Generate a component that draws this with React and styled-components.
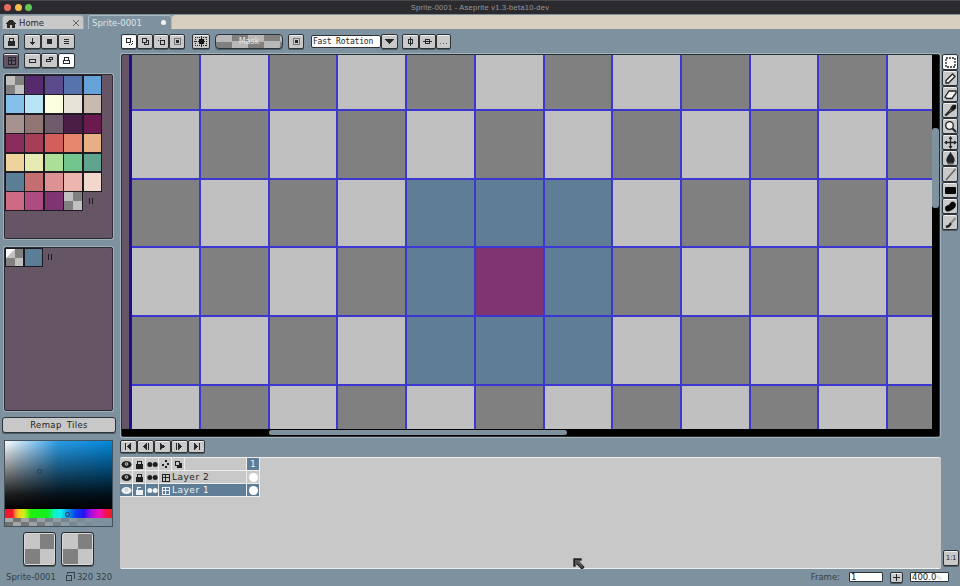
import React from "react";
import styled, { createGlobalStyle, css } from "styled-components";

const Global = createGlobalStyle`
  html, body { margin: 0; padding: 0; width: 960px; height: 586px; overflow: hidden; background: #7d929e; }
  #root { width: 960px; height: 586px; }
  * { box-sizing: border-box; }
`;

const checker = (s, a = "#808080", b = "#c0c0c0") => css`
  background: repeating-conic-gradient(${a} 0 25%, ${b} 0 50%) 0 0 / ${s}px ${s}px;
`;

const Page = styled.div`
  position: relative; width: 960px; height: 586px; display: flex; flex-direction: column;
  background: #7d929e; color: #202428; overflow: hidden;
  font-family: "DejaVu Sans", sans-serif; font-size: 8.5px; letter-spacing: 0;
`;
const TitleBar = styled.div`
  height: 14px; flex: none; background: #2b2b2f; display: flex; align-items: center; position: relative;
  padding-left: 4px; gap: 3.5px; border-top: 1px solid #48484c;
`;
const Light = styled.span`width: 7px; height: 7px; border-radius: 50%; background: ${p => p.$c};`;
const TitleText = styled.div`
  position: absolute; left: 0; right: 0; text-align: center; color: #98989b; font: 7.5px "Liberation Sans", sans-serif; letter-spacing: .25px;
`;
const TabBar = styled.div`height: 15px; flex: none; display: flex; padding-left: 2px; gap: 4px; background: #7d929e; align-items: flex-end;`;
const Tab = styled.div`
  width: ${p => p.$w}px; height: 14px; border-radius: 3px 3px 0 0; display: flex; align-items: center; gap: 3px; padding: 0 3px 0 3px;
  background: ${p => p.$active ? "#7d929e" : "#c8c8c8"}; color: ${p => p.$active ? "#dfe6ea" : "#2a2a2a"};
  border: 1px solid ${p => p.$active ? "#a9bac3" : "#9aa3a8"}; border-bottom: 0; font-size: 8.5px;
`;
const TabLabel = styled.span`flex: 1; white-space: nowrap;`;
const TabFill = styled.div`flex: 1; height: 14px; background: #d9cfc0; margin-left: -4px; border-radius: 3px 0 0 0;`;
const Dot = styled.span`width: 5px; height: 5px; border-radius: 50%; background: #f4f4f4; margin-right: 2px;`;
const Body = styled.div`flex: 1; display: flex; min-height: 0;`;
const Left = styled.div`width: 120px; flex: none; padding: 5px 0 0 3px; display: flex; flex-direction: column;`;
const Right = styled.div`flex: 1; display: flex; flex-direction: column; padding-top: 5px; min-width: 0;`;
const ButtonRow = styled.div`display: flex; gap: 5px; height: 15px; margin-bottom: 4px;`;
const Group = styled.div`display: flex; gap: 0;`;
const Btn = styled.div`
  width: ${p => p.$w || 16}px; height: ${p => p.$h || 15}px; margin-right: ${p => p.$mr || 0}px; display: flex; align-items: center; justify-content: center;
  flex: none; color: #25282b; border: 1px solid #2c3237; border-radius: 2px; font-size: 7px; letter-spacing: -.3px;
  background: ${p => p.$on ? "#fdfdfd" : p.$dark ? "#645564" : "#c9c9c9"};
  box-shadow: inset 0 1px 0 #efefef, 0 1px 0 #4f5b63;
`;
const Panel = styled.div`
  width: 109px; height: ${p => p.$h}px; margin-top: ${p => p.$mt}px; flex: none; margin-left: 1px; background: #665565; border: 1px solid #2d2a33; border-radius: 2px;
  box-shadow: 0 0 0 1px #9db0ba; position: relative;
`;
const Palette = styled.div`display: grid; grid-template-columns: repeat(5, 19.4px); grid-auto-rows: 19.4px; width: 97px;`;
const Swatch = styled.div`
  border: 1px solid #1d1a22; margin: 0 -.5px -.5px 0;
  ${p => p.$check ? checker(18) : css`background: ${p.$c};`}
`;
const Grip = styled.span`
  position: absolute; left: ${p => p.$x}px; top: ${p => p.$y}px; width: 4px; height: 6px;
  border-left: 1px solid #1c1c22; border-right: 1px solid #1c1c22;
`;
const TileRow = styled.div`display: flex; width: 38px;`;
const TileSwatch = styled.div`
  width: 19px; height: 19px; border: 1px solid #1d1a22; position: relative;
  ${p => p.$check ? checker(18) : css`background: ${p.$c};`}
`;
const Corner = styled.span`position:absolute;left:0;top:0;width:0;height:0;border-top:9px solid #fff;border-right:9px solid transparent;`;
const Remap = styled.button`
  width: 114px; height: 16px; margin: 6px 0 7px -1px; background: #c8c8c8; border: 1px solid #2f353a; border-radius: 3px; padding: 0; flex: none;
  box-shadow: 0 1px 0 #4f5b63; color: #222; font: 8.5px "DejaVu Sans", sans-serif; letter-spacing: .35px; word-spacing: 2px;
`;
const Picker = styled.div`width: 109px; height: 87px; margin-left: 1px; flex: none; border: 1px solid #42525c; position: relative; display: flex; flex-direction: column;`;
const Field = styled.div`flex: 1; background: linear-gradient(to bottom, rgba(0,0,0,0) 0%, rgba(0,0,0,.55) 48%, rgba(0,0,0,.88) 78%, #000 100%), linear-gradient(to right, #fff 0%, #2a9ce6 50%, #0388dc 100%);`;
const Hue = styled.div`height: 9px; flex: none; background: linear-gradient(to right,#f01a2e 0 7%,#f09030 10%,#f8d010 13%,#c8f020 18%,#20f010 24%,#10f020 40%,#10f0c0 46%,#10f0f0 52%,#0aa0e8 58%,#0840f0 66%,#2a10f0 74%,#a010e0 80%,#f010c0 88%,#f01080 92%,#f01a2e 96%);`;
const Alpha = styled.div`height: 8px; flex: none; background: linear-gradient(to right, rgba(125,146,158,0), #7d929e 90%), repeating-conic-gradient(#707070 0 25%, #a8a8a8 0 50%) 0 0 / 16px 8px;`;
const Ring = styled.span`position:absolute;left:${p=>p.$x}px;top:${p=>p.$y}px;width:5px;height:5px;border-radius:50%;border:1px solid #2a3a4a;`;
const BigSwatches = styled.div`display: flex; gap: 5px; margin: 5px 0 0 20px;`;
const BigSwatch = styled.div`
  width: 33px; height: 34px; border: 1px solid #252a30; border-radius: 3px; box-shadow: 0 1px 0 #4f5b63, inset 0 0 0 1px #d8d8d8;
  ${checker(32, "#808080", "#c6c6c6")}
`;
const Toolbar = styled.div`height: 15px; display: flex; align-items: center; margin: 0 0 5px 1px; flex: none;`;
const ToolGroup = styled.div`display: flex; margin-right: ${p => p.$mr}px;`;
const MaskBtn = styled.div`
  width: 68px; height: 15px; margin-right: 5px; border: 1px solid #2c3237; border-radius: 4px; display: flex; align-items: center; justify-content: center;
  color: #e8e8e8; font-size: 8px; box-shadow: 0 1px 0 #4f5b63;
  background: repeating-conic-gradient(#808080 0 25%, #b8b8b8 0 50%) 0 0 / 32px 13px;
`;
const Select = styled.div`
  width: 70px; height: 13px; background: #fdfdfd; border: 1px solid #2c3237; border-radius: 2px; font: 8px "DejaVu Sans Mono", monospace; letter-spacing: -.2px; padding: 0 0 0 1px; color:#1e1e1e; display:flex; align-items:center; white-space: nowrap;
`;
const WorkArea = styled.div`flex: none; display: flex; height: 383px;`;
const CanvasFrame = styled.div`
  width: 819px; margin-left: 1px; height: 383px; border: 1px solid #2a2f33; border-radius: 2px; position: relative; background: #000; display: grid;
  grid-template-columns: 810px 7px; grid-template-rows: 374px 7px; overflow: hidden; box-shadow: 0 0 0 1px #a4b5be;
`;
const Viewport = styled.div`display: grid; grid-template-columns: 7px 3px 1fr; background: #665565; overflow: hidden;`;
const Edge = styled.div`background: #1c0f96;`;
const Sheet = styled.div`
  grid-column: 3; display: grid; gap: 2px; background: #3d37d2;
  grid-template-columns: 67px 67px 66px 67px 67px 67px 66px 67px 67px 66px 67px 44px;
  grid-template-rows: 54px 67px 66px 67px 67px 43px;
`;
const toneColor = { d: "#808080", l: "#c0c0c0", b: "#5f7e96", p: "#7f3570" };
const Cell = styled.div`background: ${p => toneColor[p.$t]};`;
const VBar = styled.div`background: #000; position: relative;`;
const VThumb = styled.div`position:absolute;left:0;right:0;top:73px;height:80px;background:#7d929e;border-radius:3px;`;
const HBar = styled.div`background: #000; position: relative; grid-column: 1 / 3;`;
const HThumb = styled.div`position:absolute;top:1px;height:5px;left:147px;width:298px;background:#7d929e;border-radius:3px;`;
const Tools = styled.div`width: 16px; margin-left: 2px; display: flex; flex-direction: column; gap: 0;`;
const Timeline = styled.div`flex: 1; display: flex; flex-direction: column; padding-top: 3px;`;
const NavRow = styled.div`display: flex; height: 13px; margin-bottom: 4px;`;
const TimeRow = styled.div`display: flex; height: 112px;`;
const Layers = styled.div`width: 821px; background: #c8c8c8; border-top: 1px solid #eee; border-bottom: 1px solid #eee; border-radius: 2px; display:flex; flex-direction: column;`;
const LayerRow = styled.div`display: flex; height: 13px; width: 140px;`;
const LCell = styled.div`
  width: ${p => p.$w || 13}px; height: 13px; flex: none; display: flex; align-items: center; justify-content: center;
  background: ${p => p.$sel ? "#5f7e96" : "#c8c8c8"}; color: ${p => p.$sel ? "#eef2f4" : "#1f1f1f"};
  border-right: 1px solid #eee; border-bottom: 1px solid #eee;
`;
const LName = styled.div`
  width: ${p => p.$w}px; height: 13px; flex: none; padding-left: 2px; display: flex; align-items: center; gap: 2px; white-space: nowrap; font-size: 9px; letter-spacing: .5px;
  background: ${p => p.$sel ? "#5f7e96" : "#c8c8c8"}; color: ${p => p.$sel ? "#eef2f4" : "#1f1f1f"};
  border-right: 1px solid #eee; border-bottom: 1px solid #eee;
`;
const FrameDot = styled.span`width: 9px; height: 9px; border-radius: 50%; background: #fff;`;
const OneOne = styled.div`margin: 93px 0 0 2px;`;
const Status = styled.div`height: 16px; flex: none; display: flex; align-items: center; padding: 0 11px 0 6px; color: #33414a; margin-top: -1px; margin-bottom: 1px;`;
const Spacer = styled.div`flex: 1;`;
const StatText = styled.span`margin: 0 ${p => p.$mr || 0}px 0 ${p => p.$ml || 0}px; white-space: nowrap;`;
const Input = styled.div`
  width: ${p => p.$w}px; height: 10px; background: #fdfdfd; border: 1px solid #2c3237; border-radius: 1px; margin-right: ${p => p.$mr}px; font-size: 8.5px; line-height: 8px; padding-left: 1px; color:#222; white-space:nowrap; overflow:hidden;
`;
const Suffix = styled.span`color: #c4c4c4; font-size: 6px;`;
const Cursor = styled.svg`position: absolute; left: 572px; top: 557px;`;

const I = ({ children, s = 9, fill = "currentColor" }) => (
  <svg width={s} height={s} viewBox="0 0 9 9" fill={fill} shapeRendering="crispEdges">{children}</svg>
);
const T = ({ children }) => (
  <svg width="13" height="13" viewBox="0 0 13 13" fill="none" stroke="#1f2226" strokeWidth="1.300">{children}</svg>
);
const Lock = ({ open }) => <I><rect x="1" y="4" width="7" height="5" /><path d={open ? "M2 4V1h4v1H3v2z" : "M2 4V1h5v3H6V2H3v2z"} /></I>;
const Eye = () => <svg width="11" height="9" viewBox="0 0 11 9" fill="currentColor"><ellipse cx="5.500" cy="4.500" rx="5" ry="3.500" /><circle cx="5.500" cy="4" r="1.800" fill="#c8c8c8" /><circle cx="5.500" cy="4" r=".8" /></svg>;
const Dots = () => <svg width="11" height="7" viewBox="0 0 11 7" fill="currentColor"><circle cx="2.800" cy="3.500" r="2.500" /><circle cx="8.200" cy="3.500" r="2.500" /></svg>;
const Sq = () => <I><rect x="1" y="1" width="7" height="7" fill="none" stroke="currentColor" /><path d="M1 4.500h7M4.500 1v7" stroke="currentColor" /></I>;

const pal = [
  [null,"#562b6e","#5b4a8c","#5673ae","#64a2d8"],
  ["#85c0ea","#b8e4f6","#fbffdf","#e8e3d8","#c8baae"],
  ["#a69390","#917572","#705b6c","#4b1e47","#6b1a50"],
  ["#8a2d5a","#a73e58","#d25f5a","#e4876c","#e8af84"],
  ["#efd39c","#e8eab4","#acdf96","#73c58e","#5fa48e"],
  ["#5b7d96","#c46e72","#dc9292","#ecb6ae","#f2d8cc"],
  ["#cf6a85","#ad4c80","#7f3570",null],
];
const tone = (r, c) => {
  if (r === 3 && c === 5) return "p";
  if (r >= 2 && r <= 4 && c >= 4 && c <= 6) return "b";
  return (r + c) % 2 === 0 ? "d" : "l";
};

export default function App() {
  return (
    <Page>
      <Global />
      <TitleBar>
        <Light $c="#ec6a5e" /><Light $c="#f4bf4f" /><Light $c="#61c554" />
        <TitleText>Sprite-0001 - Aseprite v1.3-beta10-dev</TitleText>
      </TitleBar>
      <TabBar>
        <Tab $w={82}>
          <I s={10}><path d="M4.500 1 9 5H8v4H5.500V6h-2v3H1V5H0z" /></I>
          <TabLabel>Home</TabLabel>
          <I s={8}><path d="M1 1l7 7M8 1l-7 7" stroke="#555" fill="none" /></I>
        </Tab>
        <Tab $w={84} $active><TabLabel>Sprite-0001</TabLabel><Dot /></Tab>
        <TabFill />
      </TabBar>
      <Body>
        <Left>
          <ButtonRow>
            <Btn><Lock /></Btn>
            <Group>
              <Btn $w={17}><I><path d="M4 1h1v4h2L4.500 8 2 5h2z" /></I></Btn>
              <Btn $w={17}><I><rect x="2" y="2" width="5" height="5" /></I></Btn>
              <Btn $w={17}><I><path d="M2 2h5v1H2zM2 4h5v1H2zM2 6h5v1H2z" /></I></Btn>
            </Group>
          </ButtonRow>
          <ButtonRow>
            <Btn $dark><Sq /></Btn>
            <Group>
              <Btn $w={17}><I><path d="M1 3h7v4H1zM2 4v2h5V4z" fill="currentColor" /></I></Btn>
              <Btn $w={17}><I><path d="M4 1h4v3H6v2H1V3h3zM5 2v1h2V2zM2 4v1h3V4z" /></I></Btn>
              <Btn $w={17} $on><I><path d="M2 1h5v3h1v4H1V4h1zM3 2v2h3V2zM2 5v2h5V5z" /></I></Btn>
            </Group>
          </ButtonRow>
          <Panel $h={165} $mt={2}>
            <Palette>
              {pal.flat().map((c, i) => <Swatch key={i} $c={c} $check={!c} />)}
            </Palette>
            <Grip $x={84} $y={123} />
          </Panel>
          <Panel $h={164} $mt={8}>
            <TileRow>
              <TileSwatch $check><Corner /></TileSwatch>
              <TileSwatch $c="#5b7d96" />
            </TileRow>
            <Grip $x={43} $y={6} />
          </Panel>
          <Remap>Remap Tiles</Remap>
          <Picker>
            <Field />
            <Hue />
            <Alpha />
            <Ring $x={32} $y={28} />
            <Ring $x={60} $y={71} />
          </Picker>
          <BigSwatches><BigSwatch /><BigSwatch /></BigSwatches>
        </Left>
        <Right>
          <Toolbar>
            <ToolGroup $mr={7}>
              <Btn $on><I><path d="M1 1h5v5H1zM2 2v3h3V2zM7 4h1v1H7zM7 6h1v1H7zM4 7h1v1H4zM6 7h1v1H6z" /></I></Btn>
              <Btn><I><path d="M1 1h5v2h2v5H3V6H1zM2 2v3h3V2zM6 4v2H4v1h3V4z" /></I></Btn>
              <Btn><I><path d="M3 1h1v1H3zM1 3h1v1H1zM3 3h5v5H3zM4 4v3h3V4z" /></I></Btn>
              <Btn><I><path d="M1 1h7v7H1zM2 2v5h5V2z" fill="#777" /><rect x="3" y="3" width="3" height="3" /></I></Btn>
            </ToolGroup>
            <ToolGroup $mr={5}>
              <Btn $w={18}><svg width="14" height="11" viewBox="0 0 14 11"><rect x="5" y="3" width="5" height="5" fill="#111" /><path d="M1 1.500h12M1 9.500h12M1.500 1v9M12.500 1v9M7.500 0v11M0 5.500h14" stroke="#222" strokeDasharray="1 1" fill="none" /></svg></Btn>
            </ToolGroup>
            <MaskBtn>Mask</MaskBtn>
            <ToolGroup $mr={7}>
              <Btn><I><path d="M1 1h7v7H1zM2 2v5h5V2z" fill="#777" /><rect x="3" y="3" width="3" height="3" /></I></Btn>
            </ToolGroup>
            <Select>Fast Rotation</Select>
            <ToolGroup $mr={4}>
              <Btn $w={17}><I><path d="M0 2h9L4.500 7z" /></I></Btn>
            </ToolGroup>
            <ToolGroup $mr={0}>
              <Btn $w={17}><I><path d="M4 0h1v9H4zM2 2h5v5H2zM3 3v3h3V3z" /></I></Btn>
              <Btn $w={17}><I><path d="M0 4h9v1H0zM2 2h5v5H2zM3 3v3h3V3z" /></I></Btn>
              <Btn $w={15}><I fill="#666"><path d="M1 6h1v1H1zM4 6h1v1H4zM7 6h1v1H7z" /></I></Btn>
            </ToolGroup>
          </Toolbar>
          <WorkArea>
            <CanvasFrame>
              <Viewport>
                <div />
                <Edge />
                <Sheet>
                  {[0,1,2,3,4,5].flatMap(r => Array.from({ length: 12 }, (_, c) => <Cell key={r + "-" + c} $t={tone(r, c)} />))}
                </Sheet>
              </Viewport>
              <VBar><VThumb /></VBar>
              <HBar><HThumb /></HBar>
            </CanvasFrame>
            <Tools>
              <Btn $h={16} $on><T><rect x="2" y="2" width="9" height="9" strokeDasharray="2 1" /></T></Btn>
              <Btn $h={16}><T><path d="M2 11V8.500L8.500 2 11 4.500 4.500 11z" fill="#f2f2f2" /></T></Btn>
              <Btn $h={16}><T><path d="M1 9l4-6h7v2L8 10.500H3z" fill="#f2f2f2" /></T></Btn>
              <Btn $h={16}><T><path d="M2 11.500 1.500 11 7 5l1.500 1.500z" fill="#f2f2f2" /><path d="M7 4l2-2.500h2.500V4L9.500 6z" fill="#111" /></T></Btn>
              <Btn $h={16}><T><circle cx="5.500" cy="5.500" r="3.800" fill="#f2f2f2" /><path d="M8.500 8.500l3.500 3.500" strokeWidth="2" /></T></Btn>
              <Btn $h={16}><T><path d="M6.500 1v11M1 6.500h11" /><path d="M6.500 0 4.500 3h4zM6.500 13l-2-3h4zM0 6.500l3-2v4zM13 6.500l-3-2v4z" fill="#1f2226" stroke="none" /></T></Btn>
              <Btn $h={16}><T><path d="M6.500 1C8 4 10.500 6 10 8.500A3.600 3.600 0 0 1 3 8.500C2.500 6 5 4 6.500 1z" fill="#1f2226" /><path d="M3.500 11.500h6" strokeWidth="2" stroke="#555" /></T></Btn>
              <Btn $h={16}><T><path d="M2 12 11.500 1" stroke="#5a5a5a" strokeWidth="1.200" /></T></Btn>
              <Btn $h={16}><T><rect x="1" y="3" width="11" height="7" rx="1" fill="#050505" stroke="none" /></T></Btn>
              <Btn $h={16}><T><path d="M1 8C1 5 5 6 6 3.500 7 1.500 10 1 11.500 3.500 13 6 10 9 7 10.500 3 12.500 1 11 1 8z" fill="#050505" stroke="none" /></T></Btn>
              <Btn $h={16}><T><path d="M2 11l3-1 2-3" stroke="#222" strokeWidth="2.400" /><path d="M7 7l4.500-5" stroke="#8a8a8a" strokeWidth="2" /></T></Btn>
            </Tools>
          </WorkArea>
          <Timeline>
            <NavRow>
              <Btn $w={17} $h={13}><I><path d="M1 1h1v7H1zM7 1v7L3 4.500z" /></I></Btn>
              <Btn $w={17} $h={13}><I><path d="M6 1v7L2 4.500zM7 1h1v7H7z" /></I></Btn>
              <Btn $w={17} $h={13}><I><path d="M2 1l5 3.500L2 8z" /></I></Btn>
              <Btn $w={17} $h={13}><I><path d="M3 1v7l4-3.500zM1 1h1v7H1z" /></I></Btn>
              <Btn $w={17} $h={13}><I><path d="M2 1v7l4-3.500zM7 1h1v7H7z" /></I></Btn>
            </NavRow>
            <TimeRow>
              <Layers>
                <LayerRow>
                  <LCell><Eye /></LCell><LCell><Lock /></LCell><LCell><Dots /></LCell>
                  <LCell><I><path d="M4 0h2v2H4zM1 4h2v2H1zM6 3h2v2H6zM4 6h2v2H4z" /></I></LCell>
                  <LCell><I><path d="M1 1h5v2h2v5H3V6H1zM2 2v3h3V2z" /></I></LCell>
                  <LName $w={62} />
                  <LCell $sel>1</LCell>
                </LayerRow>
                <LayerRow>
                  <LCell><Eye /></LCell><LCell><Lock /></LCell><LCell><Dots /></LCell>
                  <LName $w={88}><Sq />Layer 2</LName>
                  <LCell><FrameDot /></LCell>
                </LayerRow>
                <LayerRow>
                  <LCell $sel><Eye /></LCell><LCell $sel><Lock open /></LCell><LCell $sel><Dots /></LCell>
                  <LName $sel $w={88}><Sq />Layer 1</LName>
                  <LCell $sel><FrameDot /></LCell>
                </LayerRow>
              </Layers>
              <OneOne><Btn $h={16}>1:1</Btn></OneOne>
            </TimeRow>
          </Timeline>
        </Right>
      </Body>
      <Status>
        <StatText $mr={9}>Sprite-0001</StatText>
        <I s={10}><path d="M2 0h7v6H8V1H3v1H2zM1 3h5v5H1zM2 4v3h3V4z" /></I>
        <StatText $ml={2}>320 320</StatText>
        <Spacer />
        <StatText $mr={9}>Frame:</StatText>
        <Input $w={34} $mr={7}>1</Input>
        <Btn $w={13} $h={11} $mr={7}><I><path d="M4 1h1v7H4zM1 4h7v1H1z" /></I></Btn>
        <Input $w={39} $mr={0}>400.0<Suffix>%</Suffix></Input>
      </Status>
      <Cursor width="15" height="15" viewBox="0 0 15 15">
        <path d="M1 1h9v3H7l6 6-3 3-6-6v3H1z" fill="#222" stroke="#c8c8c8" strokeWidth=".6" />
        <path d="M3 3h4L11 10l-1 1-5-5v2H3z" fill="#555" />
      </Cursor>
    </Page>
  );
}
